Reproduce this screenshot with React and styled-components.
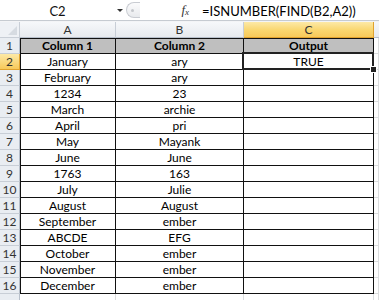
import React from "react";
import styled, { createGlobalStyle } from "styled-components";

const rows = [
  ["Column 1", "Column 2", "Output"],
  ["January", "ary", "TRUE"],
  ["February", "ary", ""],
  ["1234", "23", ""],
  ["March", "archie", ""],
  ["April", "pri", ""],
  ["May", "Mayank", ""],
  ["June", "June", ""],
  ["1763", "163", ""],
  ["July", "Julie", ""],
  ["August", "August", ""],
  ["September", "ember", ""],
  ["ABCDE", "EFG", ""],
  ["October", "ember", ""],
  ["November", "ember", ""],
  ["December", "ember", ""]
];

const GlobalStyle = createGlobalStyle`
  body {
    margin: 0;
    background: #fff;
    font-family: "Lato", "Liberation Sans", sans-serif;
    overflow: hidden;
  }
`;

class App extends React.Component {
  render() {
    return (
      <Page>
        <GlobalStyle />
        <FormulaBar>
          <NameBox>
            <NameText>C2</NameText>
            <Arrow />
          </NameBox>
          <Grip>
            <GripDot />
          </Grip>
          <Fx>
            f<sub>x</sub>
          </Fx>
          <Formula>=ISNUMBER(FIND(B2,A2))</Formula>
        </FormulaBar>
        <Gap />
        <Sheet>
          <Corner>
            <CornerTri />
          </Corner>
          <ColHead>A</ColHead>
          <ColHead>B</ColHead>
          <ColHead $active>C</ColHead>
          <ColHead $last />
          {rows.map((r, i) => (
            <React.Fragment key={i}>
              <RowHead $active={i === 1}>{i + 1}</RowHead>
              {r.map((v, j) => (
                <Cell
                  key={j}
                  $head={i === 0}
                  $first={j === 0}
                  $top={i === 0}
                  $selected={i === 1 && j === 2}
                >
                  {v}
                </Cell>
              ))}
              <Blank />
            </React.Fragment>
          ))}
          <RowHead />
          <Blank />
          <Blank />
          <Blank />
          <Blank />
        </Sheet>
      </Page>
    );
  }
}

// styling
const Page = styled.div`
  width: 379px;
  height: 300px;
  overflow: hidden;
  background: #fff;
`;
const FormulaBar = styled.div`
  height: 20px;
  display: flex;
  align-items: center;
  background: #fff;
  border-bottom: 1px solid #c6cbd1;
  font-size: 13px;
  color: #111;
`;
const NameBox = styled.div`
  width: 126px;
  height: 100%;
  display: flex;
  align-items: center;
`;
const NameText = styled.div`
  width: 115px;
  text-align: center;
  padding-top: 2px;
`;
const Arrow = styled.div`
  width: 0;
  height: 0;
  margin-left: 2px;
  border-left: 3px solid transparent;
  border-right: 3px solid transparent;
  border-top: 3px solid #333;
`;
const Grip = styled.div`
  width: 14px;
  height: 16px;
  border: 1px solid #c9ccd2;
  border-right: 0;
  border-radius: 9px 0 0 9px;
  background: linear-gradient(#fbfbfc, #e8eaed);
  display: flex;
  align-items: center;
  padding-left: 4px;
  box-sizing: border-box;
`;
const GripDot = styled.div`
  width: 3px;
  height: 3px;
  border-radius: 2px;
  background: #c4c7cc;
`;
const Fx = styled.div`
  width: 61px;
  text-align: right;
  padding-right: 12px;
  box-sizing: border-box;
  font-family: "Liberation Serif", serif;
  font-style: italic;
  font-size: 13px;
  color: #333;
  sub {
    font-size: 9px;
    vertical-align: -1px;
  }
`;
const Formula = styled.div`
  flex: 1;
  padding-left: 1px;
  padding-top: 2px;
  font-size: 13px;
  color: #000;
`;
const Gap = styled.div`
  height: 1px;
  background: #f3f4f6;
`;
const Sheet = styled.div`
  display: grid;
  grid-template-columns: 20px 96px 128px 130px 1fr;
  grid-auto-rows: 16px;
  font-size: 12px;
`;
const Corner = styled.div`
  position: relative;
  background: #eef1f5;
  border-right: 1px solid #c8ced6;
  border-bottom: 1px solid #c8ced6;
`;
const CornerTri = styled.div`
  position: absolute;
  right: 2px;
  bottom: 2px;
  width: 0;
  height: 0;
  border-left: 9px solid transparent;
  border-bottom: 9px solid #d6dbe1;
`;
const ColHead = styled.div`
  display: flex;
  align-items: center;
  justify-content: center;
  color: #333;
  border-right: 1px solid ${p => (p.$active ? "#e0a22e" : "#c8ced6")};
  border-bottom: 1px solid ${p => (p.$active ? "#e0a22e" : "#b7bfca")};
  background: ${p =>
    p.$active
      ? "linear-gradient(#fde9a6, #f9d66f 55%, #f7c95a)"
      : "linear-gradient(#f6f8fa, #e7eaee)"};
  ${p => p.$last && "border-right: 0;"}
`;
const RowHead = styled.div`
  display: flex;
  align-items: center;
  justify-content: center;
  color: #333;
  background: ${p =>
    p.$active ? "linear-gradient(#fde9a6, #f7c95a)" : "#e9edf2"};
  border-bottom: 1px solid ${p => (p.$active ? "#e0a22e" : "#c8ced6")};
  border-right: 1px solid ${p => (p.$active ? "#e0a22e" : "#b7bfca")};
`;
const Cell = styled.div`
  position: relative;
  display: flex;
  align-items: center;
  justify-content: center;
  color: #000;
  white-space: nowrap;
  background: ${p => (p.$head ? "#bfbfbf" : "#fff")};
  font-weight: ${p => (p.$head ? 700 : 400)};
  border-right: 1px solid #111;
  border-bottom: 1px solid #111;
  box-shadow: ${p =>
    p.$first && p.$top
      ? "inset 1px 1px 0 #111"
      : p.$first
      ? "inset 1px 0 0 #111"
      : p.$top
      ? "inset 0 1px 0 #111"
      : "none"};
  ${p =>
    p.$selected &&
    `
    &::after {
      content: "";
      position: absolute;
      left: -2px;
      top: -2px;
      right: -1px;
      bottom: -1px;
      border: 2px solid #222;
    }
    &::before {
      content: "";
      position: absolute;
      right: -4px;
      bottom: -4px;
      width: 5px;
      height: 5px;
      background: #222;
      border: 1px solid #fff;
      z-index: 1;
    }
  `}
`;
const Blank = styled.div`
  border-right: 1px solid #dadcdd;
  border-bottom: 1px solid #dadcdd;
`;

export default App;
